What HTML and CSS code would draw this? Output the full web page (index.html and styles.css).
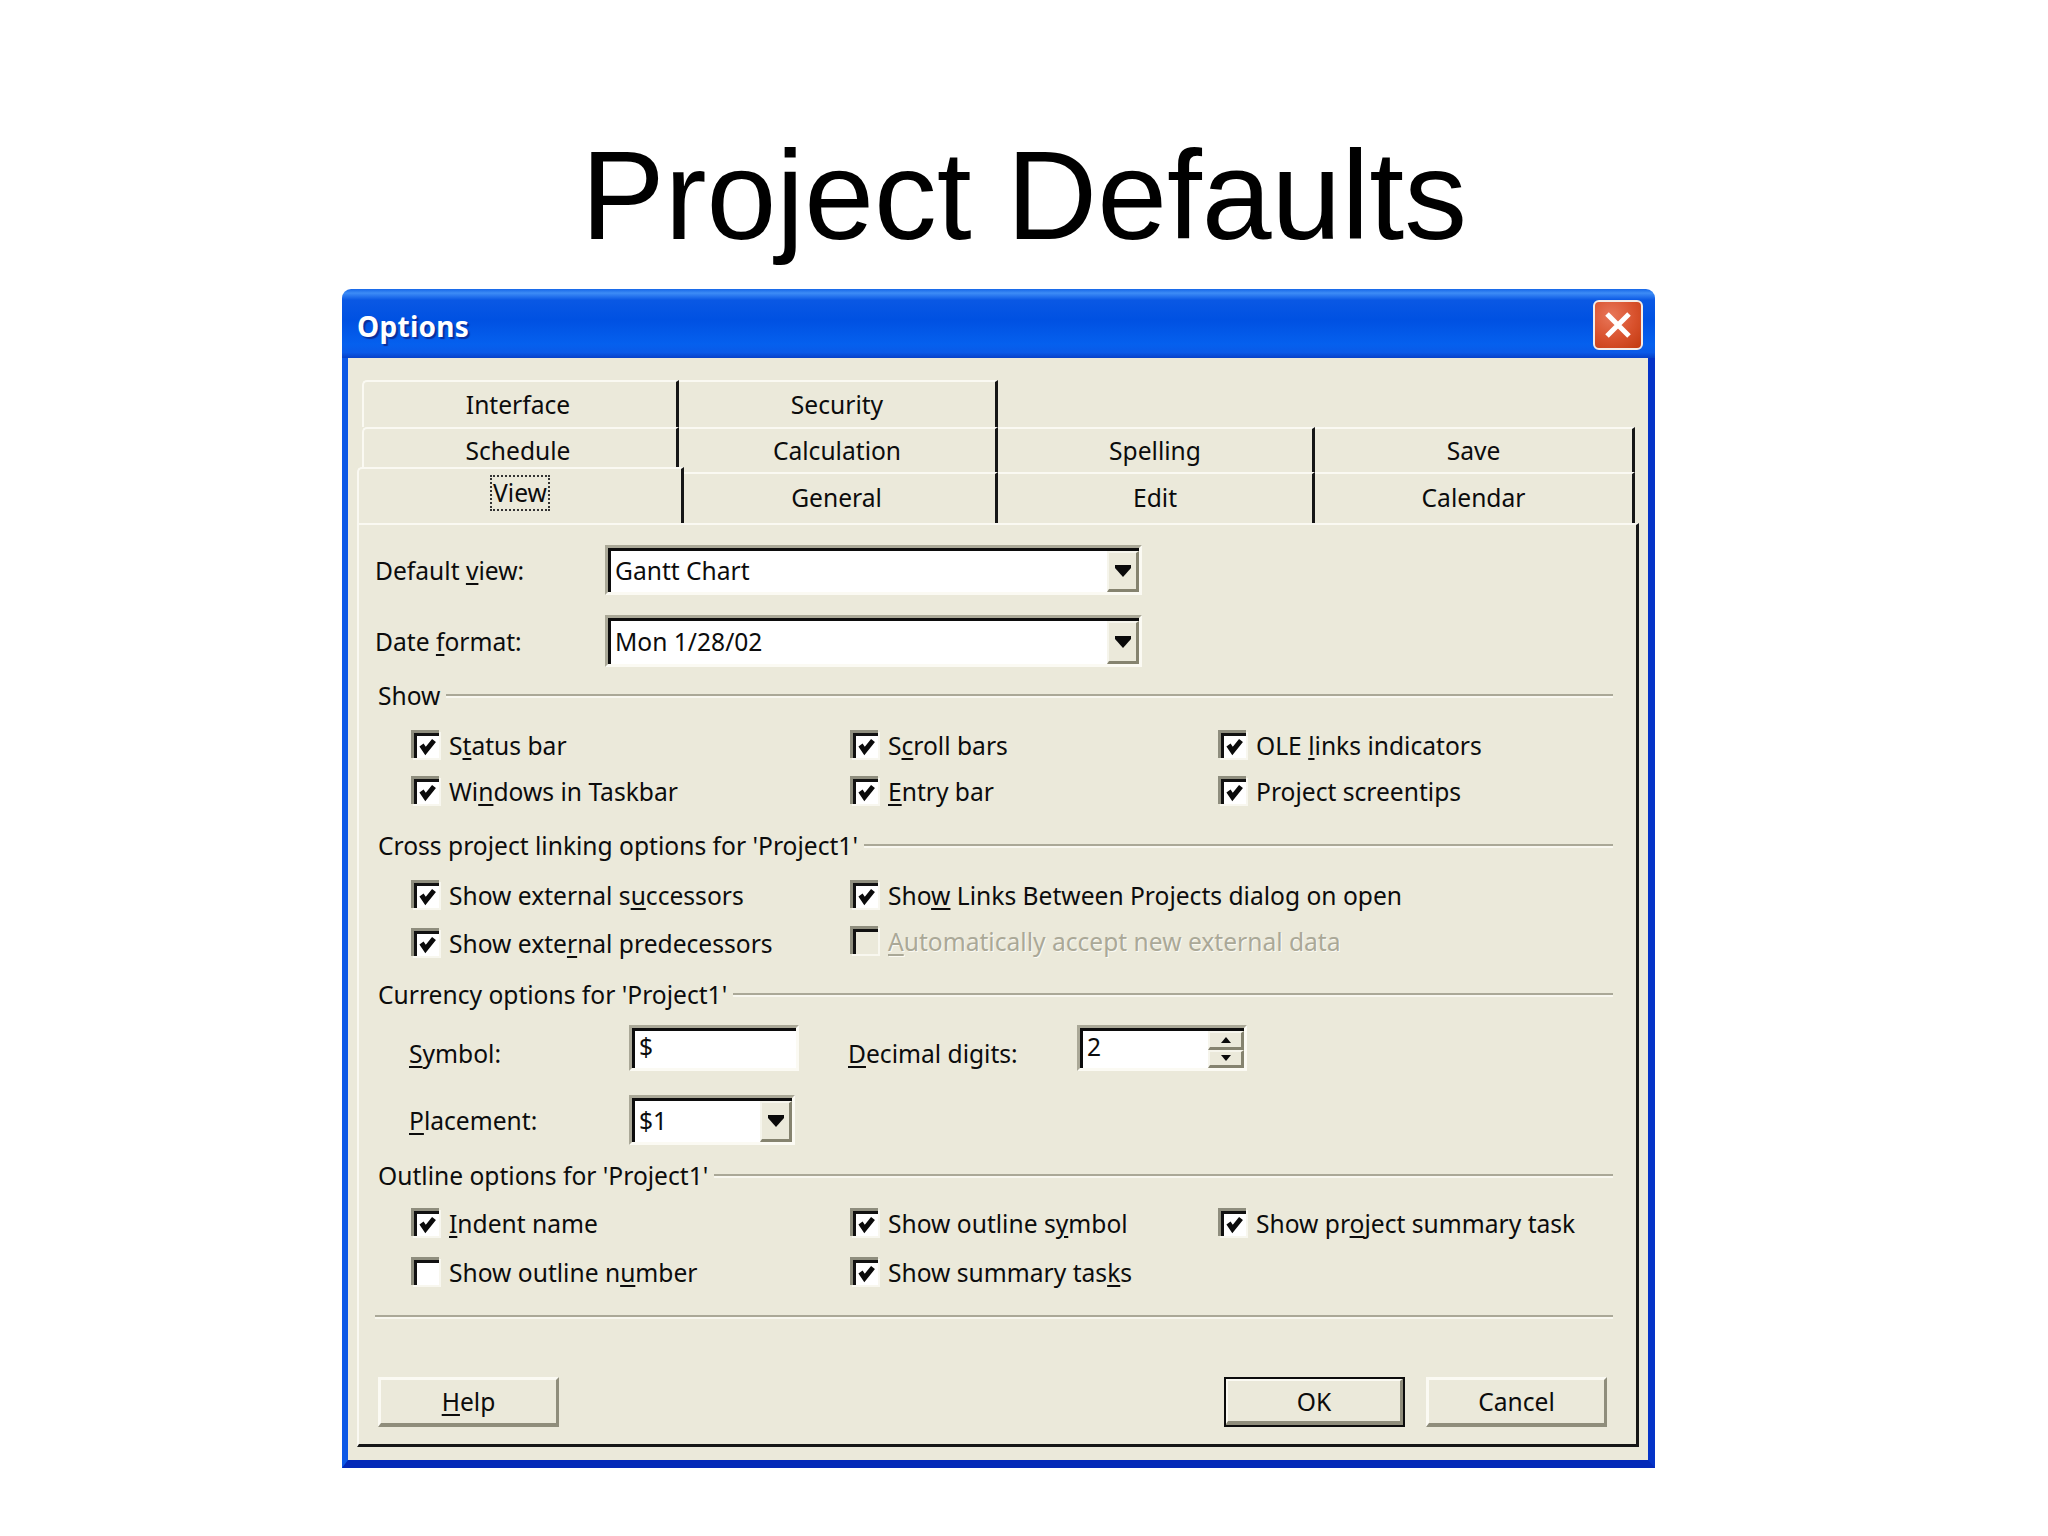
FILE: index.html
```html
<!DOCTYPE html>
<html lang="en">
<head>
<meta charset="utf-8">
<title>Project Defaults</title>
<link rel="stylesheet" href="styles.css">
</head>
<body>
<svg class="defs" width="0" height="0" aria-hidden="true">
  <symbol id="arrow" viewBox="0 0 16 12"><path d="M0 0H16V3L8 12 0 3Z"/></symbol>
  <symbol id="check" viewBox="0 0 18 18"><path d="M2.500 7 6.500 13 15 2.500" fill="none" stroke="#0a0a0a" stroke-width="5"/></symbol>
</svg>
<h1 class="slide-title">Project Defaults</h1>
<div class="window">
  <div class="titlebar">
    <span class="titlebar-text">Options</span>
    <span class="close"><svg viewBox="0 0 28 28" width="28" height="28"><path d="M3 3 25 25M25 3 3 25" stroke="#fff" stroke-width="5" fill="none"/></svg></span>
  </div>
  <div class="client">
    <div class="tabrow tabrow-1">
      <div class="tab t1">Interface</div>
      <div class="tab t2">Security</div>
    </div>
    <div class="tabrow tabrow-2">
      <div class="tab t1">Schedule</div>
      <div class="tab t2">Calculation</div>
      <div class="tab t3">Spelling</div>
      <div class="tab t4">Save</div>
    </div>
    <div class="tabrow tabrow-3">
      <div class="tab active"><span class="focus">View</span></div>
      <div class="tab t2b">General</div>
      <div class="tab t3">Edit</div>
      <div class="tab t4">Calendar</div>
    </div>
    <div class="page">
      <div class="form-row first">
        <span class="form-label">Default <u>v</u>iew:</span>
        <div class="sunken combo-wide"><div class="sunken-in"><span class="value">Gantt Chart</span><span class="dropbtn"><svg width="16" height="12"><use href="#arrow"/></svg></span></div></div>
      </div>
      <div class="form-row second">
        <span class="form-label">Date <u>f</u>ormat:</span>
        <div class="sunken combo-wide"><div class="sunken-in"><span class="value">Mon 1/28/02</span><span class="dropbtn"><svg width="16" height="12"><use href="#arrow"/></svg></span></div></div>
      </div>

      <div class="group-head g-show"><span>Show</span><i class="rule"></i></div>
      <div class="checks c-show">
        <label class="chk"><span class="box on"><svg width="18" height="18"><use href="#check"/></svg></span><span>S<u>t</u>atus bar</span></label>
        <label class="chk"><span class="box on"><svg width="18" height="18"><use href="#check"/></svg></span><span>S<u>c</u>roll bars</span></label>
        <label class="chk"><span class="box on"><svg width="18" height="18"><use href="#check"/></svg></span><span>OLE <u>l</u>inks indicators</span></label>
        <label class="chk"><span class="box on"><svg width="18" height="18"><use href="#check"/></svg></span><span>Wi<u>n</u>dows in Taskbar</span></label>
        <label class="chk"><span class="box on"><svg width="18" height="18"><use href="#check"/></svg></span><span><u>E</u>ntry bar</span></label>
        <label class="chk"><span class="box on"><svg width="18" height="18"><use href="#check"/></svg></span><span>Pro<u>j</u>ect screentips</span></label>
      </div>

      <div class="group-head g-cross"><span>Cross project linking options for 'Project1'</span><i class="rule"></i></div>
      <div class="checks c-cross">
        <label class="chk"><span class="box on"><svg width="18" height="18"><use href="#check"/></svg></span><span>Show external s<u>u</u>ccessors</span></label>
        <label class="chk span2"><span class="box on"><svg width="18" height="18"><use href="#check"/></svg></span><span>Sho<u>w</u> Links Between Projects dialog on open</span></label>
        <label class="chk"><span class="box on"><svg width="18" height="18"><use href="#check"/></svg></span><span>Show exte<u>r</u>nal predecessors</span></label>
        <label class="chk span2 disabled"><span class="box off"></span><span><u>A</u>utomatically accept new external data</span></label>
      </div>

      <div class="group-head g-cur"><span>Currency options for 'Project1'</span><i class="rule"></i></div>
      <div class="cur-row cur-1">
        <span class="cur-label low"><u>S</u>ymbol:</span>
        <div class="sunken input-sym"><div class="sunken-in"><span class="value high">$</span></div></div>
        <span class="dec-label low"><u>D</u>ecimal digits:</span>
        <div class="sunken input-sym"><div class="sunken-in"><span class="value high">2</span>
          <span class="spin"><span class="spin-b"><svg width="10" height="6" viewBox="0 0 10 6"><path d="M5 0 10 6H0Z"/></svg></span><span class="spin-b"><svg width="10" height="6" viewBox="0 0 10 6"><path d="M0 0H10L5 6Z"/></svg></span></span>
        </div></div>
      </div>
      <div class="cur-row cur-2">
        <span class="cur-label"><u>P</u>lacement:</span>
        <div class="sunken input-place"><div class="sunken-in"><span class="value">$1</span><span class="dropbtn"><svg width="16" height="12"><use href="#arrow"/></svg></span></div></div>
      </div>

      <div class="group-head g-out"><span>Outline options for 'Project1'</span><i class="rule"></i></div>
      <div class="checks c-out">
        <label class="chk"><span class="box on"><svg width="18" height="18"><use href="#check"/></svg></span><span><u>I</u>ndent name</span></label>
        <label class="chk"><span class="box on"><svg width="18" height="18"><use href="#check"/></svg></span><span>Show outline s<u>y</u>mbol</span></label>
        <label class="chk"><span class="box on"><svg width="18" height="18"><use href="#check"/></svg></span><span>Show pr<u>o</u>ject summary task</span></label>
        <label class="chk"><span class="box"></span><span>Show outline n<u>u</u>mber</span></label>
        <label class="chk"><span class="box on"><svg width="18" height="18"><use href="#check"/></svg></span><span>Show summary tas<u>k</u>s</span></label>
      </div>

      <div class="separator"></div>
      <div class="buttons">
        <span class="btn"><span><u>H</u>elp</span></span>
        <span class="spacer"></span>
        <span class="btn default">OK</span>
        <span class="btn">Cancel</span>
      </div>
    </div>
  </div>
</div>
</body>
</html>
```
FILE: styles.css
```css
html, body { margin: 0; padding: 0; background: #fff; }
body { width: 2048px; height: 1536px; overflow: hidden; font-family: "Noto Sans", "DejaVu Sans", sans-serif; font-size: 24.600px; color: #0c0c0c; }
.defs { position: absolute; }
u { text-decoration-thickness: 2px; text-underline-offset: 3px; }

.slide-title { margin: 0; padding-top: 126px; height: 289px; box-sizing: border-box; text-align: center; font-family: "Liberation Sans", Arial, sans-serif; font-weight: 400; font-size: 125.500px; line-height: 140px; color: #000; }

.window { margin: 0 0 0 342px; width: 1313px; height: 1179px; box-sizing: border-box; display: flex; flex-direction: column; }
.titlebar { height: 69px; flex: none; border-radius: 9px 9px 0 0; display: flex; align-items: center; justify-content: space-between; padding: 0 12px 0 15px; box-sizing: border-box;
  background: linear-gradient(180deg, #1767e8 0, #3d8cf6 6%, #0a58e4 16%, #0051e2 45%, #0560ee 80%, #0a5ae8 92%, #0741c8 100%); }
.titlebar-text { color: #fff; font-weight: 700; font-size: 28px; letter-spacing: .3px; text-shadow: 2px 2px 1px #0a2f9c; margin-top: 5px; }
.close { width: 50px; height: 50px; box-sizing: border-box; border: 2px solid #f4ece6; border-radius: 6px; display: flex; align-items: center; justify-content: center; margin-top: 3px; background: radial-gradient(circle at 35% 30%, #e8775a 0, #d8512c 55%, #c23a10 100%); }

.client { flex: 1; display: flex; flex-direction: column; box-sizing: border-box; background: #ebe9da; padding: 22px 9px 13px 9px; border-left: 6px solid #0c58e6; border-right: 7px solid #0433c8; border-bottom: 8px solid #0429b8; }

.tabrow { display: flex; flex: none; margin-left: 5px; }
.tabrow-1 { height: 47px; }
.tabrow-2 { height: 45px; }
.tabrow-3 { height: 51px; margin-left: 0; }
.tab { box-sizing: border-box; height: 100%; display: flex; align-items: center; justify-content: center; background: #ebe9da; border-top: 2px solid #faf9f2; border-right: 3px solid #161616; }
.t1 { width: 317px; border-left: 2px solid #faf9f2; border-radius: 5px 0 0 0; padding-right: 4px; }
.t2 { width: 319px; }
.t2b { width: 314px; padding-right: 6px; }
.t3 { width: 317px; }
.t4 { width: 320px; }
.tab.active { width: 327px; height: 56px; margin-top: -5px; position: relative; z-index: 1; border-left: 2px solid #faf9f2; border-right: 3px solid #161616; border-radius: 5px 0 0 0; align-items: flex-start; padding-top: 6px; }
.tabrow-3 .tab { padding-bottom: 2px; }
.focus { border: 2px dotted #333; padding: 0 1px; line-height: 32px; }

.page { flex: 1; box-sizing: border-box; background: #ebe9da; border-top: 2px solid #faf9f2; border-left: 2px solid #faf9f2; border-right: 3px solid #161616; border-bottom: 3px solid #161616; padding: 0 23px 0 16px; }

.form-row { display: flex; align-items: center; }
.form-row.first { margin-top: 20px; height: 50px; }
.form-row.second { margin-top: 20px; height: 52px; }
.form-label { width: 230px; flex: none; }

.sunken { box-sizing: border-box; border: 3px solid; border-color: #aaa897 #fbfaf3 #fbfaf3 #aaa897; height: 100%; flex: none; }
.sunken-in { box-sizing: border-box; height: 100%; background: #fff; border-top: 3px solid #0c0c0c; border-left: 3px solid #0c0c0c; display: flex; align-items: center; justify-content: space-between; }
.value { padding-left: 4px; padding-bottom: 3px; white-space: nowrap; }
.value.high { margin-top: -6px; padding-bottom: 0; align-self: center; }
.combo-wide { width: 537px; }
.dropbtn { width: 32px; height: 100%; box-sizing: border-box; flex: none; display: flex; align-items: center; justify-content: center; background: #ebe9da; border-top: 2px solid #f6f5ec; border-left: 2px solid #f6f5ec; border-right: 3px solid #85836f; border-bottom: 3px solid #85836f; }
.dropbtn svg { fill: #0a0a0a; }

.group-head { display: flex; align-items: center; height: 28px; padding-left: 3px; gap: 6px; white-space: nowrap; }
.rule { flex: 1; height: 2px; background: #aaa897; border-bottom: 2px solid #f8f7ef; margin-top: 2px; }
.g-show { margin-top: 14px; }
.g-cross { margin-top: 27px; }
.g-cur { margin-top: 24px; }
.g-out { margin-top: 16px; }

.checks { display: grid; grid-template-columns: 439px 368px 1fr; row-gap: 18px; margin-left: 36px; }
.c-show { margin-top: 21px; }
.c-cross { margin-top: 21px; row-gap: 20px; }
.c-out { margin-top: 19px; row-gap: 21px; }
.chk { display: flex; align-items: center; height: 28px; gap: 10px; white-space: nowrap; }
.chk > span:last-child { padding-top: 2px; }
.span2 { grid-column: span 2; }
.box { box-sizing: border-box; width: 28px; height: 28px; flex: none; background: #fff; border-top: 3px solid #8f8e7e; border-left: 3px solid #8f8e7e; box-shadow: inset 3px 3px 0 #111, 2px 2px 0 #f8f7ef; display: flex; align-items: center; justify-content: center; padding: 2px 0 0 2px; }
.box.off { background: #ebe9da; padding: 0; }
.disabled { color: #aaa897; text-shadow: 1px 1px 0 #fbfaf3; margin-top: -2px; }

.cur-row { display: flex; align-items: center; margin-left: 34px; }
.cur-1 { margin-top: 17px; height: 46px; }
.cur-2 { margin-top: 24px; height: 50px; }
.cur-label { width: 220px; flex: none; }
.low { padding-top: 10px; }
.dec-label { width: 229px; flex: none; margin-left: 49px; }
.input-sym { width: 170px; }
.input-place { width: 166px; }
.spin { width: 36px; height: 100%; flex: none; display: flex; flex-direction: column; }
.spin-b { flex: 1; box-sizing: border-box; display: flex; align-items: center; justify-content: center; background: #ebe9da; border-top: 2px solid #f6f5ec; border-left: 2px solid #f6f5ec; border-right: 3px solid #85836f; border-bottom: 3px solid #85836f; }
.spin-b svg { fill: #0a0a0a; }

.separator { margin-top: 30px; height: 2px; background: #aaa897; border-bottom: 2px solid #f8f7ef; }
.buttons { display: flex; margin-top: 58px; height: 50px; padding: 0 6px 0 3px; gap: 21px; }
.spacer { flex: 1; }
.btn { width: 181px; box-sizing: border-box; display: flex; align-items: center; justify-content: center; background: #ebe9da; white-space: pre; border-top: 3px solid #fbfaf3; border-left: 3px solid #fbfaf3; border-right: 3px solid #8f8d7b; border-bottom: 4px solid #8f8d7b; }
.btn.default { outline: 2px solid #0c0c0c; outline-offset: -2px; border-top: 4px solid #fbfaf3; border-left: 4px solid #fbfaf3; border-right: 5px solid #8f8d7b; border-bottom: 6px solid #8f8d7b; }
```
